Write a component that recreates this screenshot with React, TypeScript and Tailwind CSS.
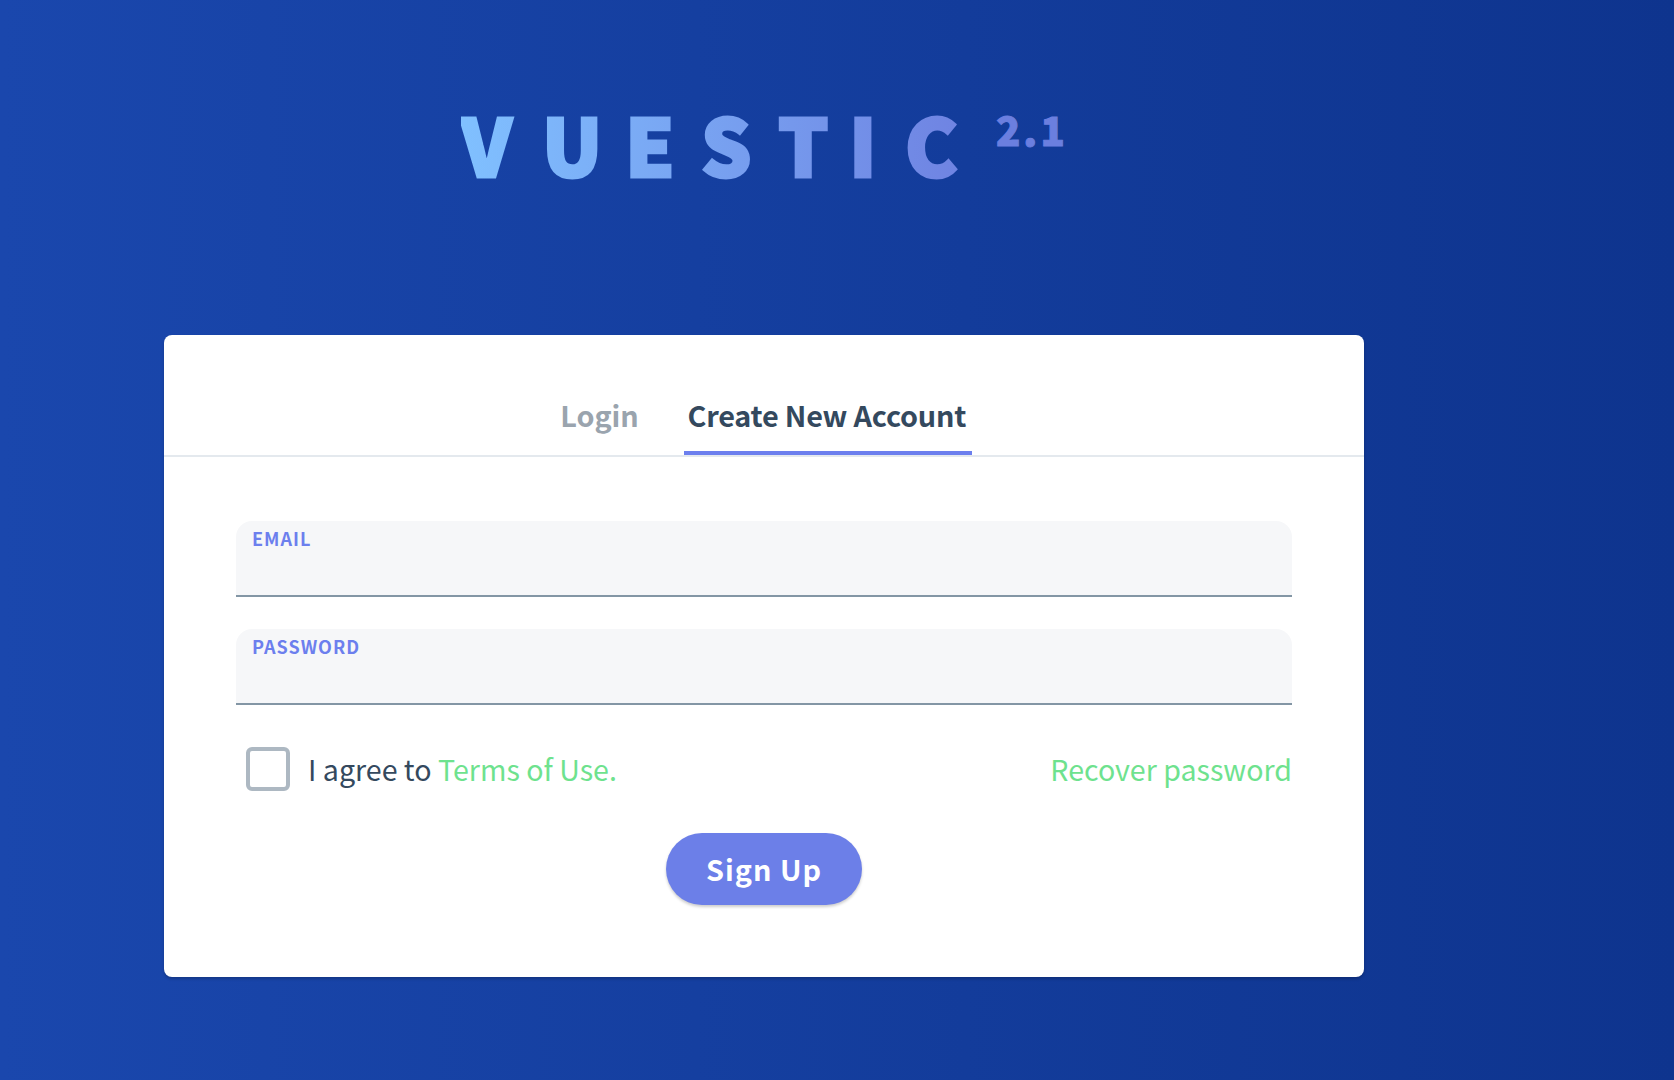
const body = { fontFamily: '"Noto Sans CJK SC", "Noto Sans", sans-serif' };

const logoLetters = [
  { char: "V", slot: "w-[81px]" },
  { char: "U", slot: "w-[83px]" },
  { char: "E", slot: "w-[76px]" },
  { char: "S", slot: "w-[77px]" },
  { char: "T", slot: "w-[71px]" },
  { char: "I", slot: "w-[56px]" },
  { char: "C", slot: "w-[89px]" },
];

function Field({ label }: { label: string }) {
  return (
    <div className="h-[76px] rounded-t-[16px] border-b-2 border-[#8396a5] bg-[#f6f7f9] px-[16px] pt-[5px]">
      <label className="block text-[18px] leading-[24px] font-bold tracking-[1px] text-[#6c7fee]">{label}</label>
    </div>
  );
}

export default function App() {
  return (
    <div
      className="h-[1080px] w-full overflow-hidden bg-gradient-to-r from-[#1a47ad] to-[#0e348e] pl-[164px]"
      style={body}
    >
      <div className="w-[1200px]">
        {/* Logo */}
        <div className="flex h-[335px] items-start pl-[297px] pt-[102px]">
          <div className="flex w-[535px] bg-gradient-to-r from-[#80c0ff] to-[#6e7fe0] bg-clip-text text-[79px] leading-[82px] font-black text-transparent [-webkit-text-stroke:3px_transparent]">
            {logoLetters.map((l) => (
              <span key={l.char} className={l.slot}>
                {l.char}
              </span>
            ))}
          </div>
          <span className="mt-[2px] text-[40px] leading-[50px] font-black tracking-[3px] text-[#6b7fdf] [-webkit-text-stroke:1px_#6b7fdf]">2.1</span>
        </div>

        {/* Card */}
        <div className="h-[642px] rounded-[8px] bg-white shadow-[0_2px_3px_rgba(0,0,0,0.2)]">
          <div className="flex h-[122px] justify-center gap-[45px] border-b-2 border-[#e4e9ee] pl-[4px]">
            <a className="mt-[34px] flex h-[86px] items-center pb-[4px] pt-[10px] text-[28.8px] font-bold text-[#9aa4ae]">Login</a>
            <a className="mt-[34px] flex h-[86px] w-[288px] items-center justify-center border-b-4 border-[#6c7fee] pr-[2px] pt-[10px] text-[28.8px] font-bold tracking-[-0.2px] text-[#34495e]">
              Create New Account
            </a>
          </div>

          <form className="px-[72px] pt-[64px]">
            <div className="flex flex-col gap-[32px]">
              <Field label="EMAIL" />
              <Field label="PASSWORD" />
            </div>

            <div className="mt-[42px] flex items-center justify-between pl-[10px]">
              <div className="flex items-center gap-[18px]">
                <span className="h-[44px] w-[44px] rounded-[6px] border-4 border-[#adb8c2]" />
                <span className="text-[28.6px] leading-[44px] text-[#34495e]">
                  I agree to <a className="text-[#6ee28e]">Terms of Use.</a>
                </span>
              </div>
              <a className="text-[28.6px] leading-[44px] text-[#6ee28e]">Recover password</a>
            </div>

            <div className="mt-[42px] flex justify-center">
              <button
                type="button"
                className="h-[72px] w-[196px] rounded-full bg-[#6c7fe8] text-[28.8px] font-bold tracking-[1px] text-white shadow-[0_2px_3px_rgba(0,0,0,0.2)]"
              >
                Sign Up
              </button>
            </div>
          </form>
        </div>
      </div>
    </div>
  );
}
